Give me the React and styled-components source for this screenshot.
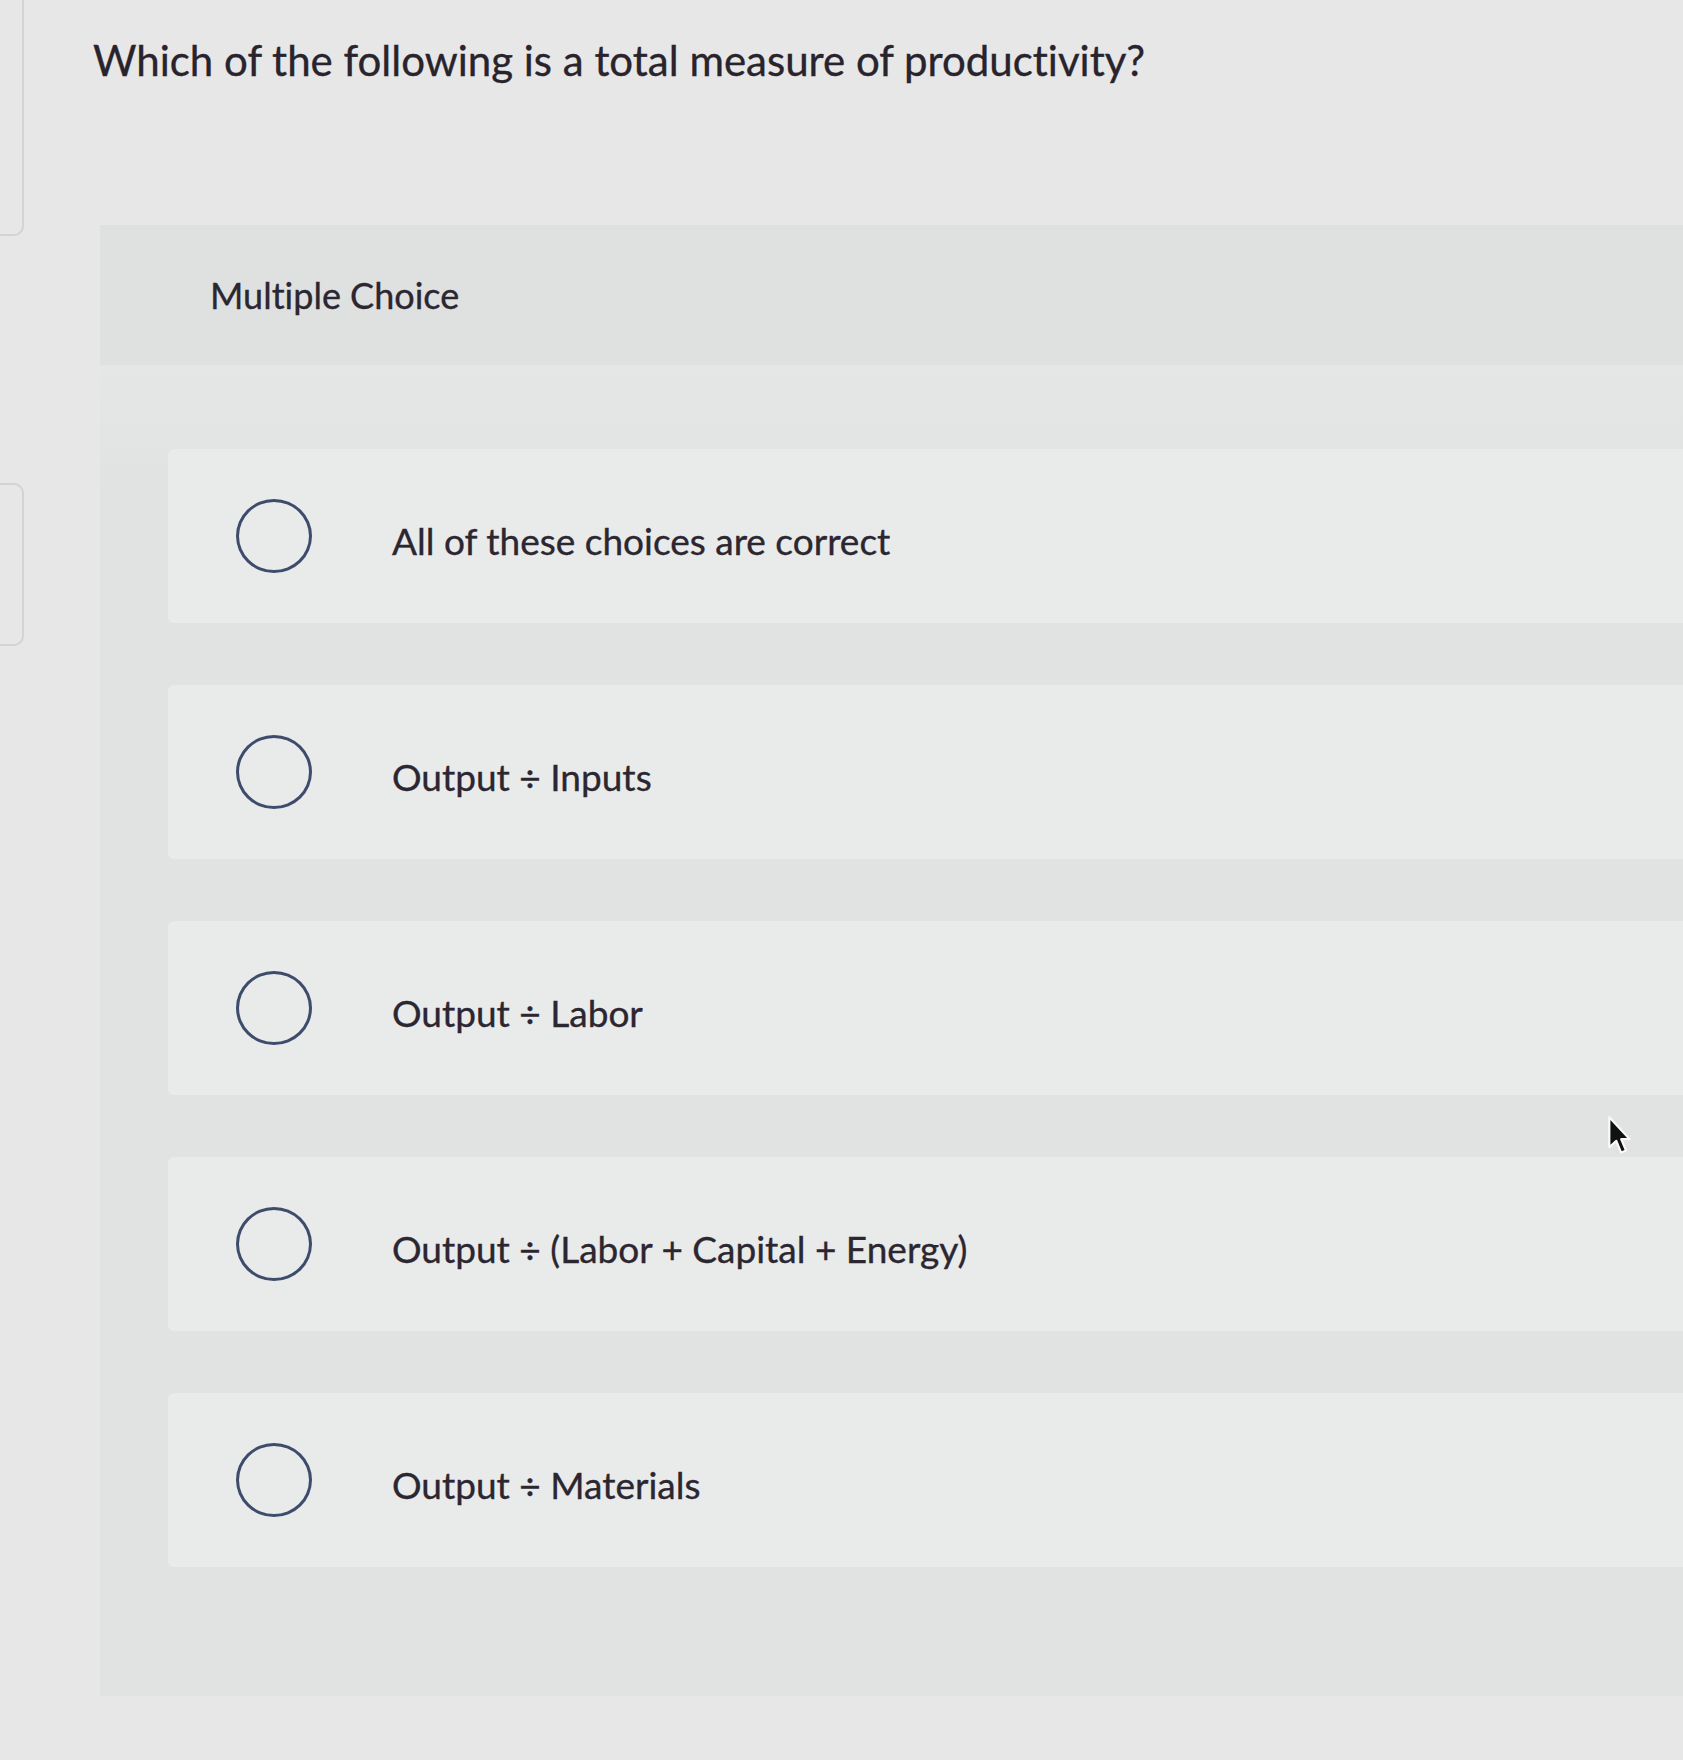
import styled, { createGlobalStyle } from "styled-components";

const GlobalStyle = createGlobalStyle`
  html, body {
    margin: 0;
    padding: 0;
    background: #e6e7e6;
  }
  body {
    font-family: "Lato", "Liberation Sans", sans-serif;
    font-variant-ligatures: none;
    color: #2a2530;
    -webkit-text-stroke: 0.35px currentColor;
  }
`;

const options = [
  "All of these choices are correct",
  "Output ÷ Inputs",
  "Output ÷ Labor",
  "Output ÷ (Labor + Capital + Energy)",
  "Output ÷ Materials",
];

const App = () => {
  return (
    <>
      <GlobalStyle />
      <Page>
        <Rail>
          <RailTab $height={236} />
          <RailTab $height={163} $top={247} $full />
        </Rail>
        <Main>
          <Question>Which of the following is a total measure of productivity?</Question>
          <Panel>
            <PanelHeader>Multiple Choice</PanelHeader>
            <OptionList>
              {options.map((text) => (
                <Option key={text}>
                  <Radio />
                  <OptionText>{text}</OptionText>
                </Option>
              ))}
            </OptionList>
          </Panel>
        </Main>
        <Cursor viewBox="0 0 24 40" aria-hidden="true">
          <path
            d="M3 2 L3 30 L9.5 24 L14 35 L18.5 33 L14 22.5 L22 22.5 Z"
            fill="#111"
            stroke="#fafafa"
            strokeWidth="2"
            strokeLinejoin="round"
          />
        </Cursor>
      </Page>
    </>
  );
};

export default App;

const Page = styled.div`
  position: relative;
  display: flex;
  min-height: 1760px;
  overflow: hidden;
`;

const Rail = styled.div`
  width: 24px;
  flex-shrink: 0;
  display: flex;
  flex-direction: column;
`;

const RailTab = styled.div`
  height: ${(p) => p.$height}px;
  margin-top: ${(p) => p.$top || 0}px;
  border: 2px solid #d2d3d3;
  border-left: none;
  border-top: ${(p) => (p.$full ? "2px solid #d2d3d3" : "none")};
  border-radius: ${(p) => (p.$full ? "0 10px 10px 0" : "0 0 10px 0")};
  box-sizing: border-box;
`;

const Main = styled.div`
  flex: 1;
  padding-left: 69px;
  padding-top: 30px;
`;

const Question = styled.h1`
  margin: 0;
  font-size: 42px;
  font-weight: 400;
  line-height: 60px;
  color: #28232c;
`;

const Panel = styled.section`
  margin-top: 135px;
  margin-left: 7px;
  background: #e1e2e2;
  padding-bottom: 129px;
`;

const PanelHeader = styled.div`
  height: 140px;
  display: flex;
  align-items: center;
  padding-left: 110px;
  font-size: 36px;
  color: #2b2630;
  background: #dfe0e0;
`;

const OptionList = styled.div`
  display: flex;
  flex-direction: column;
  gap: 62px;
  padding: 84px 0 0 68px;
  background: linear-gradient(#e5e6e6, #e1e2e2 120px);
`;

const Option = styled.div`
  height: 174px;
  display: flex;
  align-items: center;
  background: #e9eaea;
  border-radius: 6px 0 0 6px;
`;

const Radio = styled.span`
  width: 70px;
  height: 68px;
  margin-left: 68px;
  border: 3px solid #3e4c6c;
  border-radius: 50%;
  flex-shrink: 0;
`;

const OptionText = styled.span`
  margin-left: 80px;
  margin-top: 8px;
  font-size: 37px;
  color: #2b2630;
`;

const Cursor = styled.svg`
  position: absolute;
  left: 1606px;
  top: 1115px;
  width: 26px;
  height: 43px;
`;
